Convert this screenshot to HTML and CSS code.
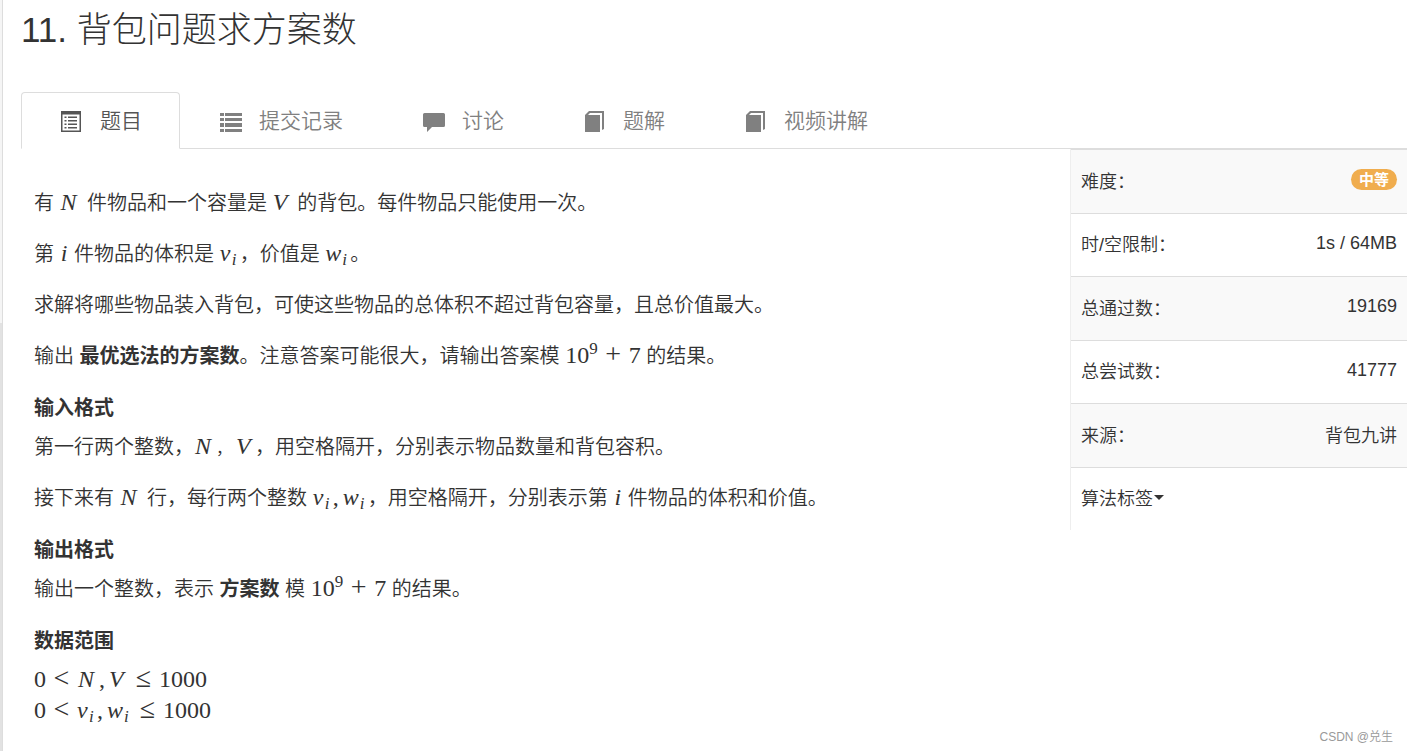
FILE: index.html
```html
<!DOCTYPE html>
<html lang="zh-CN">
<head>
<meta charset="utf-8">
<title>11. 背包问题求方案数</title>
<link rel="stylesheet" href="styles.css">
</head>
<body>
<div class="panel">
  <h1 class="title">11. 背包问题求方案数</h1>
  <nav class="tabs">
    <a class="tab active" href="#problem">
      <svg class="icon" viewBox="0 0 22 22"><path fill-rule="evenodd" d="M0 1h20v21H0zM1.500 4.500v16h17v-16z"/><path d="M3.500 6.500h2v1.500h-2zM7 6.500h9v1.500H7zM3.500 10h2v1.500h-2zM7 10h9v1.500H7zM3.500 13.500h2v1.500h-2zM7 13.500h9v1.500H7zM3.500 17h2v1.500h-2zM7 17h9v1.500H7z"/></svg>
      <span>题目</span>
    </a>
    <a class="tab" href="#submissions">
      <svg class="icon" viewBox="0 0 22 22"><path d="M0 3h4v3H0zM5 3h17v3H5zM0 8h4v3H0zM5 8h17v3H5zM0 13h4v4H0zM5 13h17v4H5zM0 19h4v3H0zM5 19h17v3H5z"/></svg>
      <span>提交记录</span>
    </a>
    <a class="tab" href="#discussion">
      <svg class="icon" viewBox="0 0 22 22"><path d="M1.500 3h19q1.500 0 1.500 1.500v11q0 1.500-1.500 1.500H9l-5 5v-5H1.500Q0 17 0 15.500v-11Q0 3 1.500 3z"/></svg>
      <span>讨论</span>
    </a>
    <a class="tab" href="#solution">
      <svg class="icon" viewBox="0 0 22 22"><path d="M1 5h15v17H1zM1 5l4-4h15v18l-2 1V3H6L4 5z"/></svg>
      <span>题解</span>
    </a>
    <a class="tab" href="#video">
      <svg class="icon" viewBox="0 0 22 22"><path d="M1 5h15v17H1zM1 5l4-4h15v18l-2 1V3H6L4 5z"/></svg>
      <span>视频讲解</span>
    </a>
  </nav>
  <div class="columns">
    <main class="content">
      <p>有 <span class="math"><i class="cap-n">N</i></span> 件物品和一个容量是 <span class="math"><i class="cap-v">V</i></span> 的背包。每件物品只能使用一次。</p>
      <p>第 <span class="math"><i class="idx">i</i></span> 件物品的体积是 <span class="math"><i class="low-v">v</i><sub>i</sub></span>，价值是 <span class="math"><i class="low-w">w</i><sub>i</sub></span>。</p>
      <p>求解将哪些物品装入背包，可使这些物品的总体积不超过背包容量，且总价值最大。</p>
      <p>输出 <strong>最优选法的方案数</strong>。注意答案可能很大，请输出答案模 <span class="math">10<sup>9</sup><span class="op">+</span>7</span> 的结果。</p>
      <h2>输入格式</h2>
      <p>第一行两个整数，<span class="math"><i class="cap-n">N</i><span class="wide-comma">，</span><i class="cap-v">V</i></span>，用空格隔开，分别表示物品数量和背包容积。</p>
      <p>接下来有 <span class="math"><i class="cap-n">N</i></span> 行，每行两个整数 <span class="math"><i class="low-v">v</i><sub>i</sub><span class="comma">,</span><i class="low-w">w</i><sub>i</sub></span>，用空格隔开，分别表示第 <span class="math"><i class="idx">i</i></span> 件物品的体积和价值。</p>
      <h2>输出格式</h2>
      <p>输出一个整数，表示 <strong>方案数</strong> 模 <span class="math">10<sup>9</sup><span class="op">+</span>7</span> 的结果。</p>
      <h2>数据范围</h2>
      <p><span class="math">0<span class="op">&lt;</span><i class="cap-n">N</i><span class="comma">,</span><i class="cap-v">V</i><span class="op rel">≤</span>1000</span><br>
      <span class="math">0<span class="op">&lt;</span><i class="low-v">v</i><sub>i</sub><span class="comma">,</span><i class="low-w">w</i><sub>i</sub><span class="op">≤</span>1000</span></p>
    </main>
    <aside class="side">
      <table class="info">
        <tr><th scope="row">难度：</th><td><span class="badge">中等</span></td></tr>
        <tr><th scope="row">时/空限制：</th><td>1s / 64MB</td></tr>
        <tr><th scope="row">总通过数：</th><td>19169</td></tr>
        <tr><th scope="row">总尝试数：</th><td>41777</td></tr>
        <tr><th scope="row">来源：</th><td>背包九讲</td></tr>
        <tr><td class="tags" colspan="2"><button class="toggle" type="button">算法标签<span class="caret"></span></button></td></tr>
      </table>
    </aside>
  </div>
</div>
<div class="watermark">CSDN @兑生</div>
</body>
</html>
```
FILE: styles.css
```css
* { box-sizing: border-box; }

body {
  margin: 0;
  min-height: 100vh;
  padding-left: 2px;
  background: linear-gradient(#f5f5f5 323px, #e2e2e2 323px);
  color: #333;
  font-family: "Liberation Sans", "Noto Sans CJK SC", sans-serif;
  font-weight: 350;
}

.panel {
  min-height: 100vh;
  padding-left: 18px;
  border-left: 1px solid #ddd;
  background: #fff;
}

.title {
  margin: 0;
  padding: 8px 0 40px;
  font-size: 35px;
  font-weight: 300;
  line-height: 44px;
}

.tabs {
  display: flex;
  border-bottom: 1px solid #ddd;
}

.tab {
  display: flex;
  align-items: center;
  gap: 17px;
  height: 57px;
  margin-bottom: -1px;
  padding: 0 39px 3px;
  border: 1px solid transparent;
  color: #808080;
  font-size: 21px;
  text-decoration: none;
}

.tab.active {
  padding-right: 37px;
  border-color: #ddd;
  border-bottom-color: #fff;
  border-radius: 4px 4px 0 0;
  background: #fff;
  color: #555;
}

.icon {
  width: 22px;
  height: 22px;
  margin-top: 3px;
  fill: currentColor;
}

.columns {
  display: flex;
  align-items: flex-start;
}

.content {
  flex: 1;
  min-width: 0;
  padding: 39px 13px 0;
  font-size: 20px;
  line-height: 31px;
}

.content p { margin: 0 0 20px; }

.content h2 {
  margin: 21px 0 8px;
  font-size: 20px;
  font-weight: 700;
}

.math {
  font-family: "Liberation Serif", "Noto Sans CJK SC", serif;
  font-size: 24px;
  font-weight: 400;
  line-height: 1;
  white-space: nowrap;
}

.math i,
.math sub,
.op,
.comma,
.wide-comma { display: inline-block; }

.math sub,
.math sup {
  font-size: 17px;
  line-height: 0;
}

.math sub {
  width: 8px;
  font-style: italic;
  vertical-align: -4px;
}

.math sup { vertical-align: 9px; }

.cap-n { width: 22px; padding-left: 1px; }
.cap-v { width: 19px; }
.low-v { width: 12px; }
.low-w { width: 17px; }
.idx { width: 9px; text-align: center; }
.comma { width: 10px; }
.wide-comma { width: 20px; font-size: 16px; }

.op {
  width: 31px;
  font-size: 28px;
  line-height: 0;
  text-align: center;
}

.side { flex: 0 0 337px; }

.info {
  width: 100%;
  border-left: 1px solid #eee;
  border-spacing: 0;
  font-size: 18px;
}

.info tr { height: 63px; }
.info tr:nth-child(odd) { height: 64px; background: #f9f9f9; }

.info th,
.info td {
  padding: 0 10px 4px;
  border-top: 1px solid #ddd;
  font-weight: 350;
}

.info th { text-align: left; }
.info td { text-align: right; }
.info .tags { text-align: left; }

.badge {
  display: inline-block;
  padding: 0 8px;
  border-radius: 11px;
  background: #f0ad4e;
  color: #fff;
  font-size: 15px;
  font-weight: 700;
  line-height: 21px;
}

.toggle {
  display: flex;
  align-items: center;
  gap: 1px;
  padding: 0;
  border: 0;
  background: none;
  color: inherit;
  font: inherit;
}

.caret {
  border: 5px solid transparent;
  border-top-color: currentColor;
  border-bottom: 0;
}

.watermark {
  position: absolute;
  right: 14px;
  bottom: 7px;
  color: #999;
  font-size: 12px;
}
```
